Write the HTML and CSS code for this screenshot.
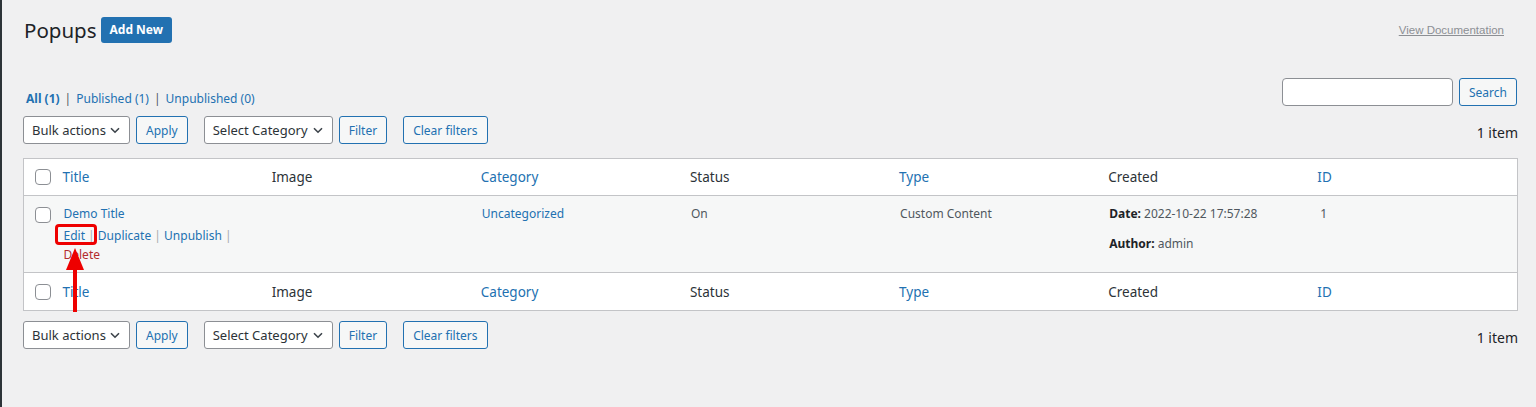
FILE: index.html
```html
<!DOCTYPE html>
<html>
<head>
  <title>Popups</title>
  <link rel="stylesheet" href="styles.css">
</head>
<body>
  <div class="wrap">
    <div class="page-head">
      <h1>Popups</h1>
      <a class="add-new">Add New</a>
      <a class="view-docs">View Documentation</a>
    </div>

    <div class="views-row">
      <ul class="subsubsub">
        <li><a class="current">All (1)</a><span class="sep">|</span></li>
        <li><a>Published (1)</a><span class="sep">|</span></li>
        <li><a>Unpublished (0)</a></li>
      </ul>
      <div class="search-box">
        <span class="search-input"></span>
        <span class="button">Search</span>
      </div>
    </div>

    <div class="tablenav">
      <div class="select-box bulk">Bulk actions
        <svg width="10" height="7" viewBox="0 0 10 7"><path d="M1 1.2l4 4 4-4" fill="none" stroke="#3c434a" stroke-width="1.6"/></svg>
      </div>
      <span class="button">Apply</span>
      <div class="select-box category">Select Category
        <svg width="10" height="7" viewBox="0 0 10 7"><path d="M1 1.2l4 4 4-4" fill="none" stroke="#3c434a" stroke-width="1.6"/></svg>
      </div>
      <span class="button">Filter</span>
      <span class="button clear">Clear filters</span>
      <span class="count">1 item</span>
    </div>

    <table class="list-table">
      <colgroup>
        <col class="col-cb">
        <col><col><col><col><col><col><col>
      </colgroup>
      <thead>
        <tr>
          <th class="cb"><span class="checkbox"></span></th>
          <th><a>Title</a></th>
          <th>Image</th>
          <th><a>Category</a></th>
          <th>Status</th>
          <th><a>Type</a></th>
          <th>Created</th>
          <th><a>ID</a></th>
        </tr>
      </thead>
      <tbody>
        <tr>
          <td class="cb"><span class="checkbox"></span></td>
          <td class="title-cell">
            <a class="row-title">Demo Title</a>
            <div class="row-actions">
              <a>Edit</a> <span class="sep">|</span> <a>Duplicate</a> <span class="sep">|</span> <a>Unpublish</a> <span class="sep">|</span>
              <a class="delete">Delete</a>
            </div>
            <span class="mark-box"></span>
            <svg class="mark-arrow" width="20" height="64" viewBox="0 0 20 64">
              <polygon points="10,0 19,22 1,22" fill="#ee0000"/>
              <rect x="8" y="20" width="4" height="44" fill="#ee0000"/>
            </svg>
          </td>
          <td></td>
          <td><a>Uncategorized</a></td>
          <td>On</td>
          <td>Custom Content</td>
          <td>
            <p class="meta"><b>Date:</b> 2022-10-22 17:57:28</p>
            <p class="meta"><b>Author:</b> admin</p>
          </td>
          <td class="id">1</td>
        </tr>
      </tbody>
      <tfoot>
        <tr>
          <th class="cb"><span class="checkbox"></span></th>
          <th><a>Title</a></th>
          <th>Image</th>
          <th><a>Category</a></th>
          <th>Status</th>
          <th><a>Type</a></th>
          <th>Created</th>
          <th><a>ID</a></th>
        </tr>
      </tfoot>
    </table>

    <div class="tablenav bottom">
      <div class="select-box bulk">Bulk actions
        <svg width="10" height="7" viewBox="0 0 10 7"><path d="M1 1.2l4 4 4-4" fill="none" stroke="#3c434a" stroke-width="1.6"/></svg>
      </div>
      <span class="button">Apply</span>
      <div class="select-box category">Select Category
        <svg width="10" height="7" viewBox="0 0 10 7"><path d="M1 1.2l4 4 4-4" fill="none" stroke="#3c434a" stroke-width="1.6"/></svg>
      </div>
      <span class="button">Filter</span>
      <span class="button clear">Clear filters</span>
      <span class="count">1 item</span>
    </div>
  </div>
</body>
</html>
```

FILE: styles.css
```css
body {
  margin: 0;
  background-color: #f0f0f1;
  border-left: 2px solid #2c3338;
  min-height: 407px;
  box-sizing: border-box;
  font-family: "Noto Sans", "Open Sans", sans-serif;
  color: #3c434a;
}
a {
  color: #2271b1;
  text-decoration: none;
  cursor: pointer;
}
.wrap {
  padding: 17px 18px 0 21px;
}

/* heading */
.page-head {
  display: flex;
  align-items: center;
  height: 26px;
}
.page-head h1 {
  margin: 0 4px 0 1px;
  font-size: 20.5px;
  font-weight: 400;
  color: #1d2327;
  line-height: 26px;
}
.add-new {
  background-color: #2271b1;
  color: #fff;
  font-size: 12px;
  font-weight: 700;
  height: 26px;
  line-height: 26px;
  padding: 0 9px;
  border-radius: 3px;
}
.view-docs {
  margin-left: auto;
  margin-right: 14px;
  font-family: "Liberation Sans", Arial, sans-serif;
  font-size: 11.5px;
  color: #8c8f94;
  text-decoration: underline;
}

/* views + search */
.views-row {
  display: flex;
  justify-content: space-between;
  align-items: flex-end;
  margin-top: 35px;
}
.subsubsub {
  list-style: none;
  margin: 0 0 -2px 3px;
  padding: 0;
  display: flex;
  font-size: 12px;
  line-height: 18px;
}
.subsubsub .current {
  font-weight: 700;
}
.subsubsub .sep {
  color: #50575e;
  margin: 0 5px;
}
.search-box {
  display: flex;
  gap: 6px;
  margin-right: 1px;
}
.search-input {
  width: 171px;
  height: 28px;
  box-sizing: border-box;
  background: #fff;
  border: 1px solid #8c8f94;
  border-radius: 4px;
}

/* buttons and selects */
.button {
  display: inline-flex;
  align-items: center;
  height: 28px;
  box-sizing: border-box;
  padding: 0 9px;
  background: #f6f7f7;
  border: 1px solid #2271b1;
  border-radius: 3px;
  color: #2271b1;
  font-size: 12px;
}
.tablenav {
  display: flex;
  align-items: center;
  gap: 6px;
  margin-top: 10px;
  height: 28px;
}
.select-box {
  display: inline-flex;
  align-items: center;
  justify-content: space-between;
  height: 28px;
  box-sizing: border-box;
  padding: 0 9px 0 8px;
  background: #fff;
  border: 1px solid #8c8f94;
  border-radius: 3px;
  font-size: 13px;
  color: #2c3338;
}
.select-box.bulk {
  width: 107px;
}
.select-box.category {
  width: 129px;
  margin-left: 10px;
}
.tablenav .clear {
  margin-left: 10px;
}
.tablenav .count {
  margin-left: auto;
  font-size: 14px;
  color: #1d2327;
  margin-top: 5px;
}
.tablenav.bottom {
  margin-top: 10px;
}
.tablenav.bottom .count {
  margin-top: 4px;
}

/* table */
.list-table {
  width: 100%;
  margin-top: 14px;
  border-collapse: collapse;
  table-layout: fixed;
  background: #fff;
  border: 1px solid #c3c4c7;
}
.col-cb {
  width: 30px;
}
.list-table th {
  height: 36px;
  padding: 0 0 0 9px;
  text-align: left;
  font-weight: 400;
  font-size: 13.5px;
  color: #2c3338;
  vertical-align: middle;
}
.list-table tfoot th {
  height: 37px;
}
.list-table thead tr {
  border-bottom: 1px solid #c3c4c7;
}
.list-table tfoot tr {
  border-top: 1px solid #c3c4c7;
}
.list-table th.cb,
.list-table td.cb {
  padding: 0 0 0 11px;
}
.checkbox {
  display: block;
  width: 16px;
  height: 16px;
  box-sizing: border-box;
  background: #fff;
  border: 1px solid #8c8f94;
  border-radius: 4px;
}
.list-table tbody tr {
  background: #f6f7f7;
}
.list-table td {
  height: 77px;
  box-sizing: border-box;
  padding: 9px 10px 0 10px;
  vertical-align: top;
  font-size: 12px;
  line-height: 18px;
  color: #50575e;
}
.list-table td.cb {
  padding-top: 11px;
}
.title-cell {
  position: relative;
}
.row-actions {
  margin-top: 3px;
  line-height: 19px;
  padding-right: 8px;
}
.row-actions .sep {
  color: #a7aaad;
}
.row-actions .delete {
  color: #b32d2e;
}
.meta {
  margin: 0 0 12px;
}
.meta b {
  color: #1d2327;
}
td.id {
  padding-left: 12px;
}

/* annotation over the row actions */
.mark-box {
  position: absolute;
  left: 1px;
  top: 28px;
  width: 42px;
  height: 21px;
  box-sizing: border-box;
  border: 3px solid #ee0000;
  border-radius: 4px;
  z-index: 2;
}
.mark-arrow {
  position: absolute;
  left: 11px;
  top: 52px;
  z-index: 2;
}
```
